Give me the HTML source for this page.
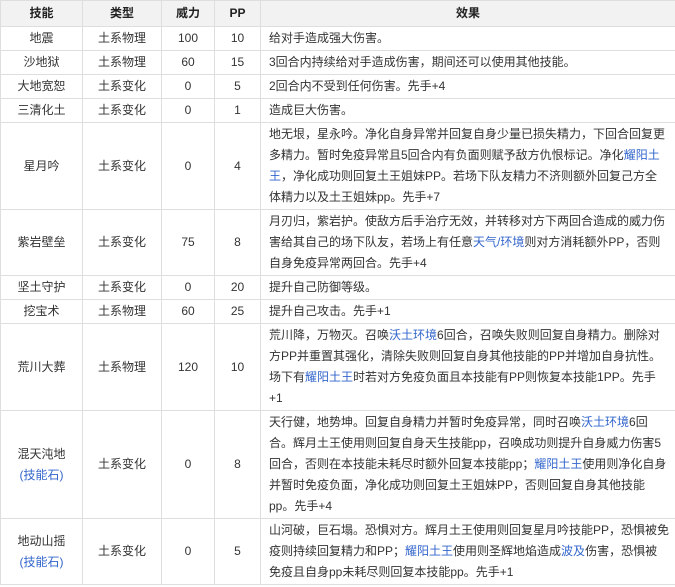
<!DOCTYPE html>
<html><head><meta charset="utf-8"><style>
body{margin:0;background:#fff;}
table{border-collapse:collapse;width:676px;table-layout:fixed;font-family:"Liberation Sans","Noto Sans CJK SC",sans-serif;font-size:12px;color:#333;}
td,th{border:1px solid #dedede;line-height:21px;padding:1px 0;text-align:center;}
th{background:#f2f2f2;font-weight:bold;height:25px;padding:0;color:#222;}
td.e{text-align:left;padding:1px 6px 1px 8px;}
a{color:#3366cc;text-decoration:none;}
</style></head><body>
<table>
<colgroup><col style="width:82px"><col style="width:79px"><col style="width:53px"><col style="width:46px"><col></colgroup>
<tr><th>技能</th><th>类型</th><th>威力</th><th>PP</th><th>效果</th></tr>
<tr><td>地震</td><td>土系物理</td><td>100</td><td>10</td><td class="e">给对手造成强大伤害。</td></tr>
<tr><td>沙地狱</td><td>土系物理</td><td>60</td><td>15</td><td class="e">3回合内持续给对手造成伤害，期间还可以使用其他技能。</td></tr>
<tr><td>大地宽恕</td><td>土系变化</td><td>0</td><td>5</td><td class="e">2回合内不受到任何伤害。先手+4</td></tr>
<tr><td>三清化土</td><td>土系变化</td><td>0</td><td>1</td><td class="e">造成巨大伤害。</td></tr>
<tr><td>星月吟</td><td>土系变化</td><td>0</td><td>4</td><td class="e">地无垠，星永吟。净化自身异常并回复自身少量已损失精力，下回合回复更多精力。暂时免疫异常且5回合内有负面则赋予敌方仇恨标记。净化<a>耀阳土王</a>，净化成功则回复土王姐妹PP。若场下队友精力不济则额外回复己方全体精力以及土王姐妹pp。先手+7</td></tr>
<tr><td>紫岩壁垒</td><td>土系变化</td><td>75</td><td>8</td><td class="e">月刃归，紫岩护。使敌方后手治疗无效，并转移对方下两回合造成的威力伤害给其自己的场下队友，若场上有任意<a>天气/环境</a>则对方消耗额外PP，否则自身免疫异常两回合。先手+4</td></tr>
<tr><td>坚土守护</td><td>土系变化</td><td>0</td><td>20</td><td class="e">提升自己防御等级。</td></tr>
<tr><td>挖宝术</td><td>土系物理</td><td>60</td><td>25</td><td class="e">提升自己攻击。先手+1</td></tr>
<tr><td>荒川大葬</td><td>土系物理</td><td>120</td><td>10</td><td class="e">荒川降，万物灭。召唤<a>沃土环境</a>6回合，召唤失败则回复自身精力。删除对方PP并重置其强化，清除失败则回复自身其他技能的PP并增加自身抗性。场下有<a>耀阳土王</a>时若对方免疫负面且本技能有PP则恢复本技能1PP。先手+1</td></tr>
<tr><td>混天沌地<br><a>(技能石)</a></td><td>土系变化</td><td>0</td><td>8</td><td class="e">天行健，地势坤。回复自身精力并暂时免疫异常，同时召唤<a>沃土环境</a>6回合。辉月土王使用则回复自身天生技能pp，召唤成功则提升自身威力伤害5回合，否则在本技能未耗尽时额外回复本技能pp；<a>耀阳土王</a>使用则净化自身并暂时免疫负面，净化成功则回复土王姐妹PP，否则回复自身其他技能pp。先手+4</td></tr>
<tr><td>地动山摇<br><a>(技能石)</a></td><td>土系变化</td><td>0</td><td>5</td><td class="e">山河破，巨石塌。恐惧对方。辉月土王使用则回复星月吟技能PP，恐惧被免疫则持续回复精力和PP；<a>耀阳土王</a>使用则圣辉地焰造成<a>波及</a>伤害，恐惧被免疫且自身pp未耗尽则回复本技能pp。先手+1</td></tr>
</table>
</body></html>
